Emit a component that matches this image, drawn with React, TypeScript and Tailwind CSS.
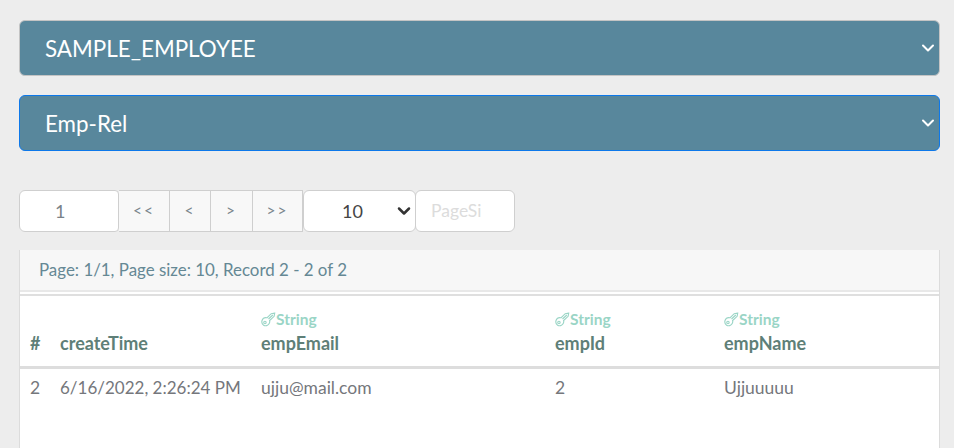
import { ChevronDown } from 'lucide-react';

function KeyIcon() {
  return (
    <svg width="15" height="15" viewBox="0 0 16 16" fill="none" stroke="currentColor" strokeWidth="1.2" aria-hidden="true">
      <path d="M14.6 1.2 L10.9 1.8 L6.3 6.2 C4.2 5.8 2 6.7 1.2 8.8 C0.5 10.8 1.2 13 2.8 14.1 C4.8 15.2 7.4 14.6 8.6 12.6 C9.4 11.3 9.5 10.2 9.2 9.1 L14 4.6 Z" />
      <circle cx="4.2" cy="11.2" r="1.3" />
      <path d="M8 7.5 L12.6 3.2" />
    </svg>
  );
}

function FieldSelect({ label, focused }: { label: string; focused?: boolean }) {
  return (
    <div
      className={`flex h-14 items-center justify-between rounded-md border bg-[#58879c] pl-[25px] pr-px text-[22.4px] text-white ${
        focused ? 'border-[#0d78ea]' : 'border-[#c4c4c4]'
      }`}
    >
      <span className="pt-[2px]">{label}</span>
      <ChevronDown size={20} strokeWidth={2.4} />
    </div>
  );
}

function PageButton({ label, width }: { label: string; width: string }) {
  return (
    <button className={`h-[42px] border border-l-0 border-[#cfcfcf] bg-[#f8f8f8] text-[15.5px] tracking-[2px] text-[#7a868c] ${width}`}>
      {label}
    </button>
  );
}

function TypeLabel() {
  return (
    <div className="-mt-px flex h-5 items-center text-[15.5px] font-bold text-[#9ad5c6]">
      <KeyIcon />
      String
    </div>
  );
}

const headerCell = 'px-0 pb-[11px] pt-[14px] text-left align-bottom text-lg font-bold leading-6 text-[#5e7f78]';
const bodyCell = 'pt-[7px] align-top text-[17.5px] leading-6 text-[#75777c]';

export default function App() {
  return (
    <div className="h-[448px] overflow-hidden bg-[#ededed] px-[19px] pt-5 font-['Lato',sans-serif]">
      <div className="w-[921px]">
        <FieldSelect label="SAMPLE_EMPLOYEE" />
        <div className="mt-[19px]">
          <FieldSelect label="Emp-Rel" focused />
        </div>

        <div className="mt-[39px] flex items-center">
          <div className="flex h-[42px] w-[100px] items-center rounded-l-md rounded-r-[4px] border border-[#cfcfcf] bg-white pl-[35px] text-lg text-[#7a8288]">
            1
          </div>
          <PageButton label="<<" width="w-[51px]" />
          <PageButton label="<" width="w-[41px]" />
          <PageButton label=">" width="w-[42px]" />
          <PageButton label=">>" width="w-[50px]" />
          <div className="flex h-[42px] w-[113px] items-center justify-between rounded-md border border-[#cfcfcf] bg-white pl-[38px] pr-px text-lg text-[#444]">
            <span>10</span>
            <ChevronDown size={20} strokeWidth={3} className="text-[#333]" />
          </div>
          <div className="-ml-px flex h-[42px] w-[100px] items-center rounded-md border border-[#cfcfcf] bg-white pl-[15px] text-[17.5px] text-[#dcdcdc]">
            PageSi
          </div>
        </div>

        <div className="mt-[18px] h-[198px] border-x border-[#dcdcdc] bg-white">
          <div className="flex h-[42px] items-center border-b-2 border-[#e8e8e8] bg-[#f7f7f7] pl-[19px] text-[16.9px] text-[#658894]">
            Page: 1/1, Page size: 10, Record 2 - 2 of 2
          </div>
          <table className="mt-[2px] w-full table-fixed border-t-2 border-[#dfdfdf]">
            <colgroup>
              <col className="w-10" />
              <col className="w-[201px]" />
              <col className="w-[294px]" />
              <col className="w-[169px]" />
              <col />
            </colgroup>
            <thead>
              <tr className="border-b-[3px] border-[#dddddd]">
                <th className={`${headerCell} pl-[10px]`}>#</th>
                <th className={headerCell}>createTime</th>
                <th className={headerCell}>
                  <TypeLabel />
                  <div className="mt-[2px]">empEmail</div>
                </th>
                <th className={headerCell}>
                  <TypeLabel />
                  <div className="mt-[2px]">empId</div>
                </th>
                <th className={headerCell}>
                  <TypeLabel />
                  <div className="mt-[2px]">empName</div>
                </th>
              </tr>
            </thead>
            <tbody>
              <tr>
                <td className={`${bodyCell} pl-[10px]`}>2</td>
                <td className={`${bodyCell} text-[17px]`}>6/16/2022, 2:26:24 PM</td>
                <td className={bodyCell}>ujju@mail.com</td>
                <td className={bodyCell}>2</td>
                <td className={bodyCell}>Ujjuuuuu</td>
              </tr>
            </tbody>
          </table>
        </div>
      </div>
    </div>
  );
}
